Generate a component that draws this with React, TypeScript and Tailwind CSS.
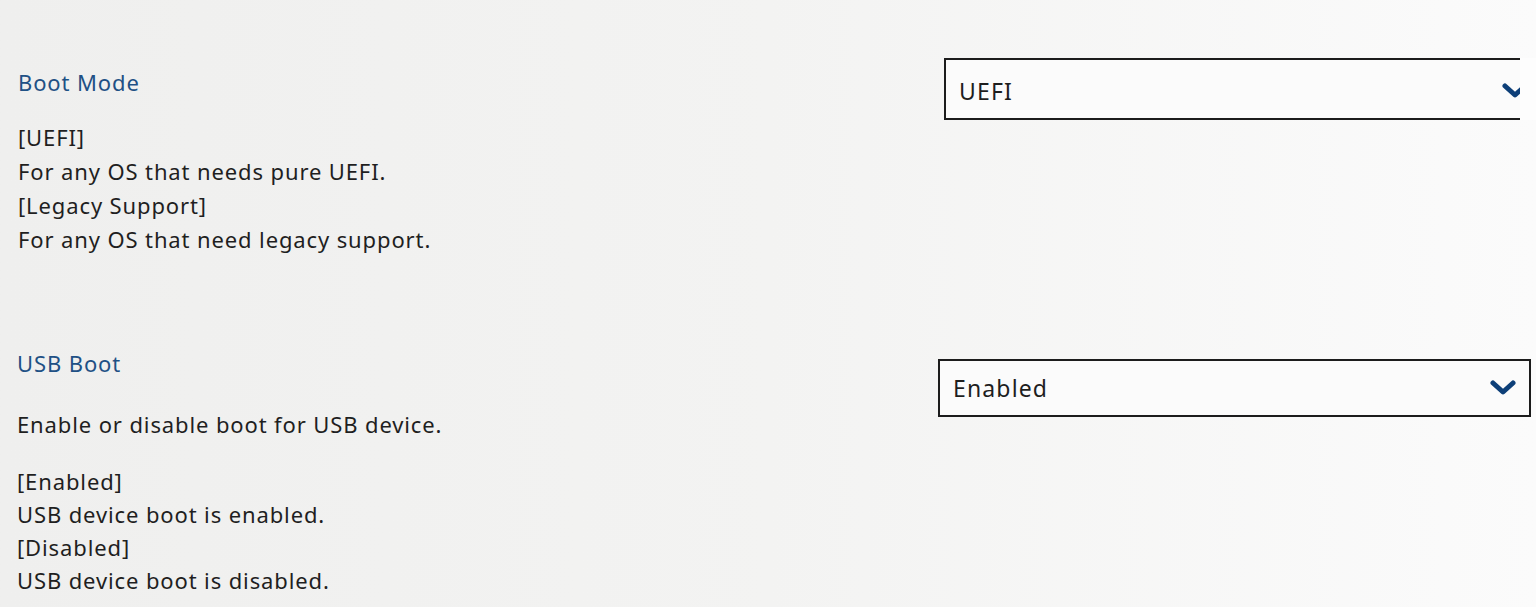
import { useState } from 'react'

const FONT = { fontFamily: '"Noto Sans", "Open Sans", sans-serif' }

function Chevron({ className = '' }: { className?: string }) {
  return (
    <svg width="26" height="16" viewBox="0 0 26 16" className={`shrink-0 ${className}`}>
      <path d="M3 3 L13 12 L23 3" fill="none" stroke="#0d3f78" strokeWidth="5" strokeLinecap="round" strokeLinejoin="round" />
    </svg>
  )
}

function Dropdown({ value, className, chevronClass }: { value: string; className: string; chevronClass?: string }) {
  return (
    <div className={`flex items-center justify-between border-2 border-[#1c1c1c] bg-[#fbfbfb] overflow-hidden ${className}`}>
      <span className="text-[23px] tracking-[0.05em] text-[#1e1e1e]">{value}</span>
      <Chevron className={chevronClass} />
    </div>
  )
}

export default function App() {
  const [bootMode] = useState('UEFI')
  const [usbBoot] = useState('Enabled')

  return (
    <div className="w-[1536px] h-[607px] overflow-hidden bg-gradient-to-r from-[#efefee] via-[#f3f3f2] to-[#fbfbfb]" style={FONT}>
      {/* Boot Mode */}
      <div className="flex items-start pt-[58px]">
        <div className="w-[944px] pl-[18px] pt-[8px]">
          <div className="text-[22px] leading-[33px] tracking-[0.04em] text-[#1f5185]">Boot Mode</div>
          <div className="mt-[21px] text-[22px] leading-[34px] tracking-[0.04em] text-[#1f1f1f]">
            <div>[UEFI]</div>
            <div>For any OS that needs pure UEFI.</div>
            <div>[Legacy Support]</div>
            <div>For any OS that need legacy support.</div>
          </div>
        </div>
        <Dropdown value={bootMode} className="w-[576px] h-[62px] pl-[13px] pt-[4px] border-r-0" chevronClass="-mr-[8px]" />
        <div className="flex-1 h-[62px] bg-[#fdfdfd]" />
      </div>

      {/* USB Boot */}
      <div className="flex items-start mt-[103px]">
        <div className="w-[938px] pl-[17px] -mt-[12px]">
          <div className="text-[22px] leading-[33px] tracking-[0.04em] text-[#1f5185]">USB Boot</div>
          <div className="mt-[28px] text-[22px] leading-[33px] tracking-[0.04em] text-[#1f1f1f]">
            <div>Enable or disable boot for USB device.</div>
            <div className="mt-[24px]">[Enabled]</div>
            <div>USB device boot is enabled.</div>
            <div>[Disabled]</div>
            <div>USB device boot is disabled.</div>
          </div>
        </div>
        <Dropdown value={usbBoot} className="w-[593px] h-[58px] pl-[13px] pr-[13px]" />
      </div>
    </div>
  )
}
